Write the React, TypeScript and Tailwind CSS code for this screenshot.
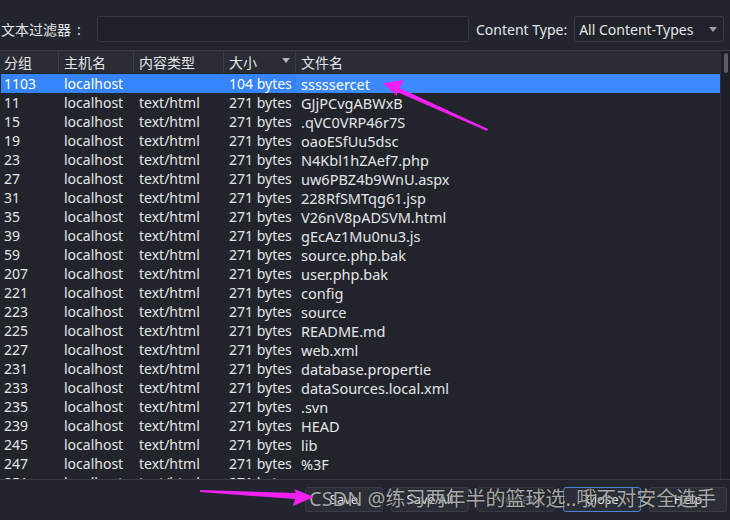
import React from "react";

const rows: [string, string, string, string, string][] = [
  ["11", "localhost", "text/html", "271 bytes", "GJjPCvgABWxB"],
  ["15", "localhost", "text/html", "271 bytes", ".qVC0VRP46r7S"],
  ["19", "localhost", "text/html", "271 bytes", "oaoESfUu5dsc"],
  ["23", "localhost", "text/html", "271 bytes", "N4Kbl1hZAef7.php"],
  ["27", "localhost", "text/html", "271 bytes", "uw6PBZ4b9WnU.aspx"],
  ["31", "localhost", "text/html", "271 bytes", "228RfSMTqg61.jsp"],
  ["35", "localhost", "text/html", "271 bytes", "V26nV8pADSVM.html"],
  ["39", "localhost", "text/html", "271 bytes", "gEcAz1Mu0nu3.js"],
  ["59", "localhost", "text/html", "271 bytes", "source.php.bak"],
  ["207", "localhost", "text/html", "271 bytes", "user.php.bak"],
  ["221", "localhost", "text/html", "271 bytes", "config"],
  ["223", "localhost", "text/html", "271 bytes", "source"],
  ["225", "localhost", "text/html", "271 bytes", "README.md"],
  ["227", "localhost", "text/html", "271 bytes", "web.xml"],
  ["231", "localhost", "text/html", "271 bytes", "database.propertie"],
  ["233", "localhost", "text/html", "271 bytes", "dataSources.local.xml"],
  ["235", "localhost", "text/html", "271 bytes", ".svn"],
  ["239", "localhost", "text/html", "271 bytes", "HEAD"],
  ["245", "localhost", "text/html", "271 bytes", "lib"],
  ["247", "localhost", "text/html", "271 bytes", "%3F"],
  ["251", "localhost", "text/html", "271 bytes", "%3F"],
];

function Row({ r }: { r: [string, string, string, string, string] }) {
  return (
    <div className="flex h-[19px] shrink-0 pt-[1px] leading-[18px] whitespace-nowrap">
      <div className="w-[59px] pl-[4px]">{r[0]}</div>
      <div className="w-[75px] pl-[5px]">{r[1]}</div>
      <div className="w-[90px] pl-[5px]">{r[2]}</div>
      <div className="w-[72px] pl-[5px]">{r[3]}</div>
      <div className="flex-1 pl-[5px] text-[14.5px]">{r[4]}</div>
    </div>
  );
}

export default function App() {
  return (
    <div
      className="relative w-[730px] h-[520px] overflow-hidden bg-[#23252e] text-[14px] text-[#e4e5e8]"
      style={{ fontFamily: '"Noto Sans", "Noto Sans CJK SC", sans-serif' }}
    >
      {/* filter row */}
      <div className="flex items-center pt-[16px] h-[42px]">
        <div className="w-[97px] pl-[1px] whitespace-nowrap flex">
          <span>文本过滤器</span>
          <span className="ml-[6px]">:</span>
        </div>
        <div className="w-[372px] h-[26px] rounded-[3px] border border-[#353843] bg-[#1f2129]" />
        <div className="ml-[7px] whitespace-nowrap">Content Type:</div>
        <div className="ml-[7px] w-[150px] h-[26px] rounded-[3px] border border-[#3a3d48] bg-[#21232b] flex items-center pl-[4px] pr-[6px]">
          <span className="flex-1 whitespace-nowrap">All Content-Types</span>
          <svg width="8" height="5" viewBox="0 0 8 5">
            <path d="M0 0 L8 0 L4 5 Z" fill="#9a9ca3" />
          </svg>
        </div>
      </div>

      {/* table */}
      <div className="mt-[8px] h-[430px] flex border-t border-b border-[#3a3d47] bg-[#22242c]">
        <div className="w-[720px] flex flex-col overflow-hidden">
          <div className="flex h-[23px] shrink-0 items-center bg-[#2a2c35] border-b border-[#20222a] whitespace-nowrap">
            <div className="w-[59px] pl-[4px] h-full flex items-center border-r border-[#3b3e48]">分组</div>
            <div className="w-[75px] pl-[5px] h-full flex items-center border-r border-[#3b3e48]">主机名</div>
            <div className="w-[90px] pl-[5px] h-full flex items-center border-r border-[#3b3e48]">内容类型</div>
            <div className="w-[72px] pl-[5px] pr-[5px] h-full flex items-center justify-between border-r border-[#3b3e48]">
              <span>大小</span>
              <svg width="8" height="5" viewBox="0 0 8 5" className="mb-[4px]">
                <path d="M0 0 L8 0 L4 5 Z" fill="#b4b6bc" />
              </svg>
            </div>
            <div className="flex-1 pl-[5px] h-full flex items-center">文件名</div>
          </div>
          <div className="flex h-[19px] shrink-0 pt-[1px] leading-[18px] whitespace-nowrap bg-[#3584fc] text-white ml-[1px]">
            <div className="w-[58px] pl-[3px]">1103</div>
            <div className="w-[75px] pl-[5px]">localhost</div>
            <div className="w-[90px] pl-[5px]"></div>
            <div className="w-[72px] pl-[5px]">104 bytes</div>
            <div className="flex-1 pl-[5px] text-[14.5px] bg-[#3b89fd] -mt-[1px] pt-[1px]">sssssercet</div>
          </div>
          {rows.map((r, i) => (
            <Row key={i} r={r} />
          ))}
        </div>
        <div className="w-[10px] bg-[#1d1f26] border-l border-[#2c2f38] flex justify-center pt-[2px]">
          <div className="w-[4px] h-[20px] rounded-full bg-[#5b5e67]" />
        </div>
      </div>

      {/* buttons */}
      <div className="flex justify-end gap-[8px] pr-[3px] mt-[7px] text-[13px]">
        {["Save", "Save All", "Preview", "Close", "Help"].map((b) => (
          <div
            key={b}
            className={
              "w-[78px] h-[25px] rounded-[3px] flex items-center justify-center border " +
              (b === "Close"
                ? "border-[#4b83d6] bg-[#2b2e38] text-[#e8e8ea]"
                : b === "Preview"
                ? "border-[#353843] bg-[#282a33] text-[#5d6068]"
                : "border-[#3a3d47] bg-[#2b2e37] text-[#e8e8ea]")
            }
          >
            {b}
          </div>
        ))}
      </div>

      {/* watermark */}
      <div
        className="absolute left-[309px] top-[486px] text-[20px] leading-[26px] text-[#d6d6d6]/80 whitespace-nowrap pointer-events-none"
        style={{ textShadow: "0 0 1px #000" }}
      >
        CSDN @练习两年半的篮球选..哦不对安全选手
      </div>

      {/* magenta arrows */}
      <svg className="absolute left-0 top-0 pointer-events-none" width="730" height="520" viewBox="0 0 730 520">
        <path d="M383 83 L404 80 L399.5 88 L488 129 L487 131 L397 92 L397 96 Z" fill="#f020f0" />
        <path d="M200 490 L296 493 L294 489 L314 497 L293 506 L295 499 L200 492 Z" fill="#f020f0" />
      </svg>
    </div>
  );
}
